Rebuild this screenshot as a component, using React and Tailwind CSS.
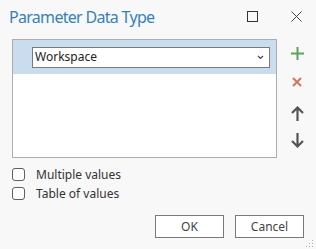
import React from "react";

function Check({ label }) {
  return (
    <div className="flex items-center h-[19px]">
      <div className="w-[13px] h-[13px] border border-[#5f5f5f] rounded-[3px] bg-white" />
      <span className="ml-[11px] text-[12px] text-[#333]">{label}</span>
    </div>
  );
}

export default function App() {
  return (
    <div
      className="relative w-[316px] h-[249px] bg-[#f8f8f8] flex flex-col overflow-hidden"
      style={{ fontFamily: '"Noto Sans", "Open Sans", sans-serif' }}
    >
      <div className="flex items-center h-[33px] pl-[9px]">
        <span className="text-[16px] text-[#3481be] tracking-[-0.7px]">Parameter Data Type</span>
        <svg className="ml-auto" width="11" height="11" viewBox="0 0 11 11">
          <rect x="0.5" y="0.5" width="10" height="10" fill="none" stroke="#333" strokeWidth="1" />
        </svg>
        <svg className="ml-[33px] mr-[14px]" width="11" height="11" viewBox="0 0 11 11">
          <path d="M0.5 0.5L10.5 10.5M10.5 0.5L0.5 10.5" stroke="#444" strokeWidth="1" />
        </svg>
      </div>
      <div className="flex mt-[6px] pl-[12px]">
        <div className="w-[265px] h-[119px] border border-[#adadad] bg-white flex flex-col">
          <div className="h-[34px] bg-[#c9ddef] flex items-center pl-[19px] pr-[6px]">
            <div className="flex-1 h-[21px] border border-[#7a7a7a] bg-white flex items-center pl-[2px] pr-[5px]">
              <span className="text-[12px] text-[#222]">Workspace</span>
              <svg className="ml-auto" width="7" height="5" viewBox="0 0 7 5">
                <path d="M1 1L3.5 3.5L6 1" fill="none" stroke="#444" strokeWidth="1.1" />
              </svg>
            </div>
          </div>
        </div>
        <div className="flex-1 flex flex-col items-center pl-[1px]">
          <svg className="mt-[8px]" width="13" height="13" viewBox="0 0 13 13">
            <path d="M6.5 0V13M0 6.5H13" stroke="#5aa55c" strokeWidth="2" />
          </svg>
          <svg className="mt-[17px]" width="10" height="10" viewBox="0 0 10 10">
            <path d="M1 1L9 9M9 1L1 9" stroke="#d9735f" strokeWidth="2" />
          </svg>
          <svg className="mt-[19px]" width="13" height="15" viewBox="0 0 13 15">
            <path d="M6.5 2V15M1 7L6.5 1.5L12 7" fill="none" stroke="#555" strokeWidth="2.2" />
          </svg>
          <svg className="mt-[12px]" width="13" height="15" viewBox="0 0 13 15">
            <path d="M6.5 0V13M1 8L6.5 13.5L12 8" fill="none" stroke="#555" strokeWidth="2.2" />
          </svg>
        </div>
      </div>
      <div className="flex flex-col mt-[7px] pl-[12px]">
        <Check label="Multiple values" />
        <Check label="Table of values" />
      </div>
      <div className="flex justify-end gap-[11px] pr-[12px] mt-[12px]">
        <button className="w-[69px] h-[23px] border border-[#7a7a7a] bg-white text-[12px] text-[#444]">OK</button>
        <button className="w-[69px] h-[23px] border border-[#7a7a7a] bg-white text-[12px] text-[#444]">Cancel</button>
      </div>
      <svg className="absolute right-[2px] bottom-[1px]" width="8" height="8" viewBox="0 0 8 8">
        <g fill="#b0b0b0">
          <rect x="6" y="0" width="1" height="1" />
          <rect x="3" y="3" width="1" height="1" />
          <rect x="6" y="3" width="1" height="1" />
          <rect x="0" y="6" width="1" height="1" />
          <rect x="3" y="6" width="1" height="1" />
          <rect x="6" y="6" width="1" height="1" />
        </g>
      </svg>
    </div>
  );
}
